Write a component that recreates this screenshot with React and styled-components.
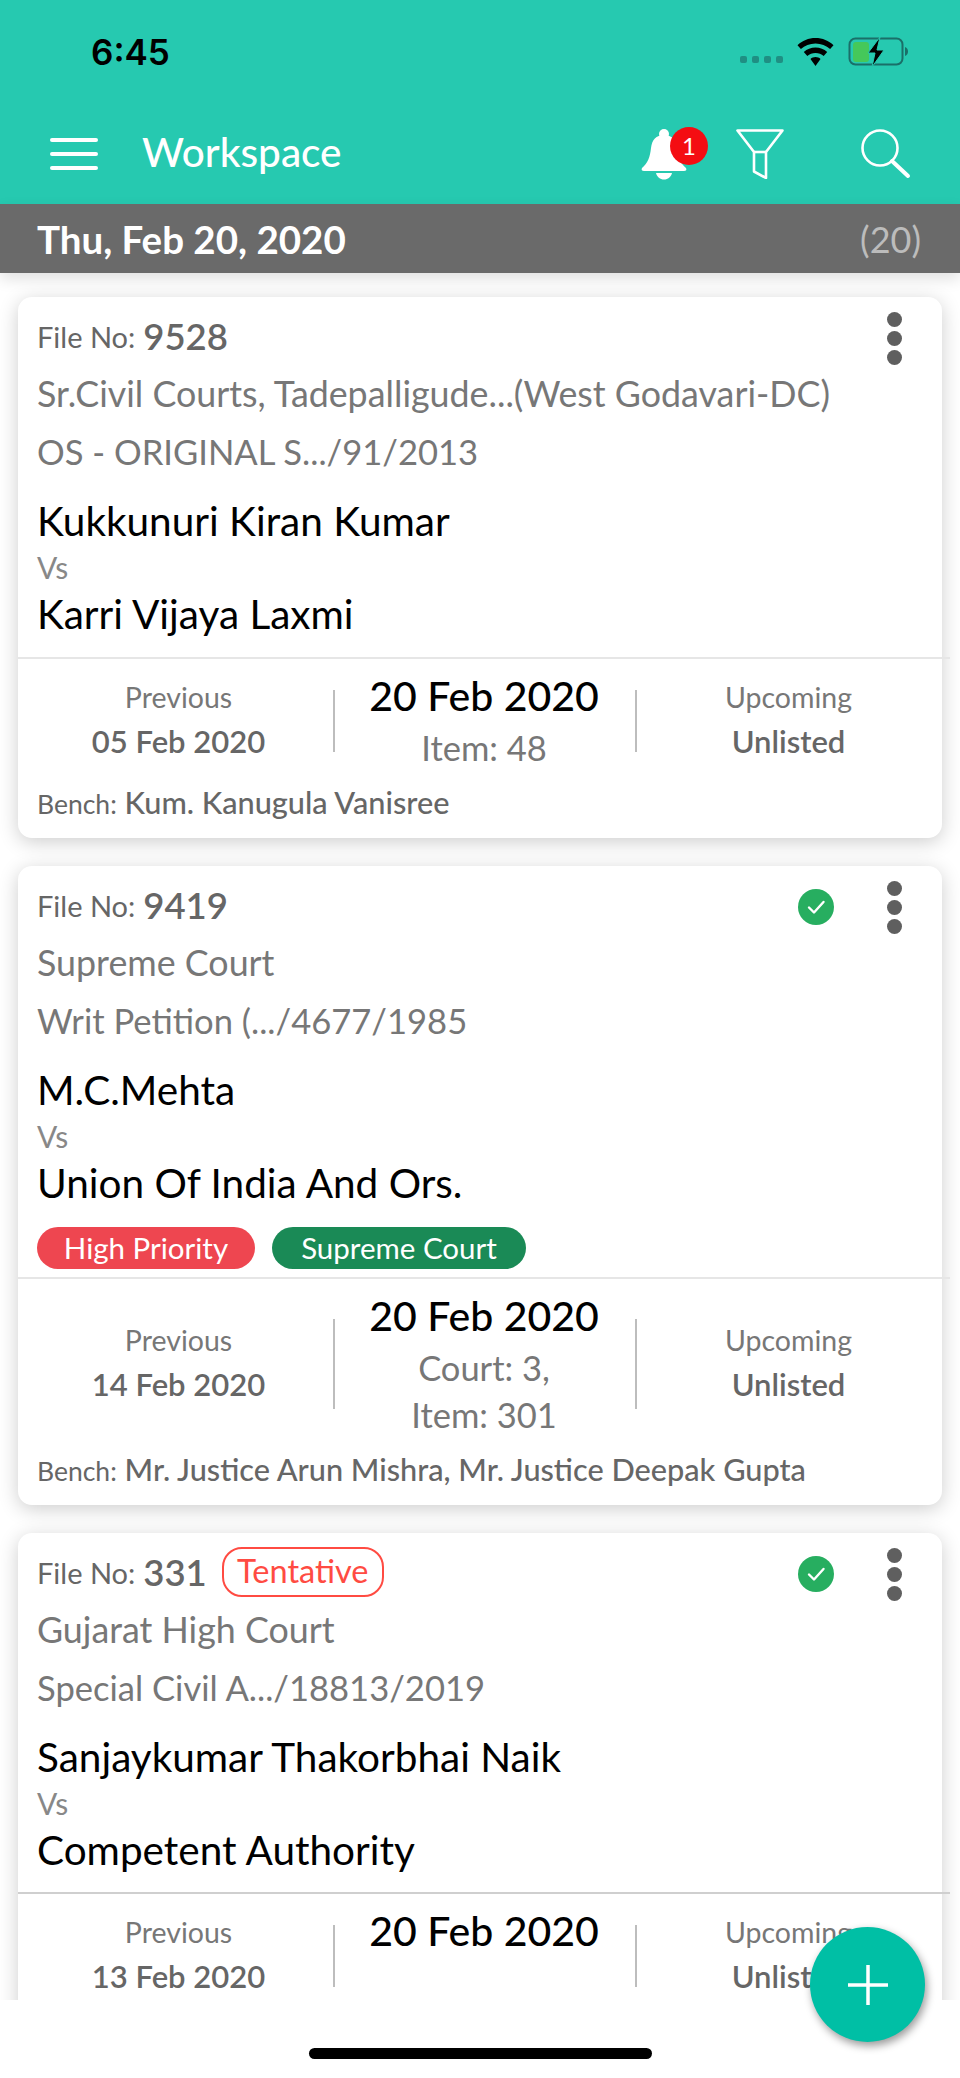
import React from "react";
import styled, { createGlobalStyle } from "styled-components";

const GlobalStyle = createGlobalStyle`
  html, body {
    margin: 0;
    padding: 0;
    background: #fff;
    font-family: "Lato", "Open Sans", sans-serif;
  }
  * { box-sizing: border-box; }
`;

const cases = [
  {
    id: 1,
    fileNo: "9528",
    court: "Sr.Civil Courts, Tadepalligude...(West Godavari-DC)",
    caseNo: "OS - ORIGINAL S.../91/2013",
    first: "Kukkunuri Kiran Kumar",
    second: "Karri Vijaya Laxmi",
    previous: "05 Feb 2020",
    item: ["Item: 48"],
    bench: "Kum. Kanugula Vanisree",
    gap: 19,
  },
  {
    id: 2,
    fileNo: "9419",
    done: true,
    court: "Supreme Court",
    caseNo: "Writ Petition (.../4677/1985",
    first: "M.C.Mehta",
    second: "Union Of India And Ors.",
    chips: true,
    previous: "14 Feb 2020",
    item: ["Court: 3,", "Item: 301"],
    bench: "Mr. Justice Arun Mishra, Mr. Justice Deepak Gupta",
    gap: 8,
  },
  {
    id: 3,
    fileNo: "331",
    tentative: true,
    done: true,
    court: "Gujarat High Court",
    caseNo: "Special Civil A.../18813/2019",
    first: "Sanjaykumar Thakorbhai Naik",
    second: "Competent Authority",
    previous: "13 Feb 2020",
    item: [],
    gap: 18,
  },
];

function WifiIcon() {
  return (
    <svg width="37" height="28" viewBox="0 0 37 28">
      <path d="M18.5 0C11.5 0 5.2 2.7 0.5 7.2l3.4 3.8C7.7 7.500 12.900 5.400 18.500 5.400S29.300 7.500 33.100 11l3.400-3.800C31.800 2.700 25.500 0 18.500 0z" fill="#000" />
      <path d="M18.500 9.500c-4.500 0-8.600 1.700-11.700 4.500l3.500 3.900c2.200-1.900 5-3 8.200-3s6 1.100 8.200 3l3.500-3.900c-3.100-2.800-7.200-4.500-11.700-4.500z" fill="#000" />
      <path d="M18.500 19c-2 0-3.700 0.700-5 1.900l5 7.100 5-7.100c-1.300-1.200-3-1.900-5-1.900z" fill="#000" />
    </svg>
  );
}

function BatteryIcon() {
  return (
    <svg width="62" height="30" viewBox="0 0 62 30">
      <rect x="1.500" y="1.500" width="53" height="26" rx="6" fill="none" stroke="#1a6f68" strokeWidth="2" />
      <path d="M57 10c2 0.500 3 2.500 3 4.500s-1 4-3 4.500z" fill="#1a6f68" />
      <rect x="5" y="5" width="16" height="20" rx="3" fill="#45c85a" />
      <path d="M32 0 20 16h7L24 30l12-17h-7z" fill="#000" stroke="#26c9b0" strokeWidth="1" />
    </svg>
  );
}

function BellIcon() {
  return (
    <svg width="48" height="52" viewBox="0 0 48 52">
      <circle cx="23" cy="6" r="5" fill="#fff" />
      <path d="M23 7c-8 0-12 5-13 13-1 9-3 15-9 20-1 2 0 3 2 3h40c2 0 3-1 2-3-6-5-8-11-9-20-1-8-5-13-13-13z" fill="#fff" />
      <path d="M15 45h16c-1 4-4 6.500-8 6.500s-7-2.500-8-6.500z" fill="#fff" />
    </svg>
  );
}

function FunnelIcon() {
  return (
    <svg width="48" height="50" viewBox="0 0 48 50">
      <path d="M1.500 1.500h45L30 23v26l-12-6.500V23z" fill="none" stroke="#fff" strokeWidth="2.600" strokeLinejoin="round" />
      <path d="M18 23h12" stroke="#fff" strokeWidth="2.600" />
    </svg>
  );
}

function SearchIcon() {
  return (
    <svg width="50" height="50" viewBox="0 0 50 50">
      <circle cx="19" cy="19" r="17.500" fill="none" stroke="#fff" strokeWidth="2.600" />
      <path d="M31 32l16 15" stroke="#fff" strokeWidth="4" strokeLinecap="round" />
    </svg>
  );
}

function CheckIcon() {
  return (
    <svg width="36" height="36" viewBox="0 0 36 36">
      <circle cx="18" cy="18" r="18" fill="#27ae60" />
      <path d="M11 18.500l5 5 9.500-10.500" fill="none" stroke="#fff" strokeWidth="2.400" strokeLinecap="round" strokeLinejoin="round" />
    </svg>
  );
}

function CaseCard({ data }) {
  return (
    <Card>
      <FileRow>
        <FileLabel>File No:</FileLabel>
        <FileNumber>{data.fileNo}</FileNumber>
        {data.tentative && <Tentative>Tentative</Tentative>}
        <FileActions>
          {data.done && <CheckIcon />}
          <Kebab>
            <Dot />
            <Dot />
            <Dot />
          </Kebab>
        </FileActions>
      </FileRow>
      <InfoLine>{data.court}</InfoLine>
      <CaseLine>{data.caseNo}</CaseLine>
      <FirstParty>{data.first}</FirstParty>
      <Versus>Vs</Versus>
      <SecondParty>{data.second}</SecondParty>
      {data.chips && (
        <Chips>
          <Chip $color="#ee4650" $width={218}>High Priority</Chip>
          <Chip $color="#1a8a56" $width={254}>Supreme Court</Chip>
        </Chips>
      )}
      <Divider $gap={data.gap} $strong={data.id === 3} />
      <Dates>
        <SideCol>
          <SideLabel>Previous</SideLabel>
          <SideValue>{data.previous}</SideValue>
        </SideCol>
        <Separator $tall={data.item.length > 1} />
        <MainCol>
          <MainDate>20 Feb 2020</MainDate>
          <ItemLines>
            {data.item.map((line) => (
              <ItemLine key={line}>{line}</ItemLine>
            ))}
          </ItemLines>
        </MainCol>
        <Separator $tall={data.item.length > 1} />
        <SideCol>
          <SideLabel>Upcoming</SideLabel>
          <SideValue>Unlisted</SideValue>
        </SideCol>
      </Dates>
      <Bench>
        {data.bench && (
          <>
            <BenchLabel>Bench:</BenchLabel> {data.bench}
          </>
        )}
      </Bench>
    </Card>
  );
}

export default function App() {
  return (
    <Page>
      <GlobalStyle />
      <Header>
        <StatusBar>
          <Time>6:45</Time>
          <StatusIcons>
            <SignalDots>
              <SignalDot />
              <SignalDot />
              <SignalDot />
              <SignalDot />
            </SignalDots>
            <WifiIcon />
            <BatteryIcon />
          </StatusIcons>
        </StatusBar>
        <NavBar>
          <Burger>
            <BurgerLine />
            <BurgerLine />
            <BurgerLine />
          </Burger>
          <NavTitle>Workspace</NavTitle>
          <NavIcons>
            <BellWrap>
              <BellIcon />
              <Badge>1</Badge>
            </BellWrap>
            <FunnelIcon />
            <SearchIcon />
          </NavIcons>
        </NavBar>
      </Header>
      <DateBar>
        <DateText>Thu, Feb 20, 2020</DateText>
        <DateCount>(20)</DateCount>
      </DateBar>
      <List>
        {cases.map((c) => (
          <CaseCard key={c.id} data={c} />
        ))}
      </List>
      <HomeArea>
        <HomeBar />
      </HomeArea>
      <Fab>
        <svg width="42" height="42" viewBox="0 0 42 42">
          <path d="M21 1v40M1 21h40" stroke="#fff" strokeWidth="3.500" />
        </svg>
      </Fab>
    </Page>
  );
}

const Page = styled.div`
  position: relative;
  width: 960px;
  height: 2078px;
  display: flex;
  flex-direction: column;
  overflow: hidden;
  background: #fff;
`;

const Header = styled.header`
  height: 204px;
  background: #26c9b0;
  flex-shrink: 0;
`;

const StatusBar = styled.div`
  height: 104px;
  padding: 0 50px 0 91px;
  display: flex;
  align-items: center;
  justify-content: space-between;
`;

const Time = styled.span`
  font-family: "Inter", sans-serif;
  font-size: 35px;
  font-weight: 600;
  color: #000;
`;

const StatusIcons = styled.div`
  display: flex;
  align-items: center;
  gap: 14px;
`;

const SignalDots = styled.div`
  display: flex;
  gap: 5px;
  margin-top: 14px;
`;

const SignalDot = styled.span`
  width: 7px;
  height: 7px;
  border-radius: 2px;
  background: #1f8f83;
`;

const NavBar = styled.div`
  height: 100px;
  padding: 0 49px 0 50px;
  display: flex;
  align-items: center;
`;

const Burger = styled.div`
  width: 48px;
  display: flex;
  flex-direction: column;
  gap: 10px;
`;

const BurgerLine = styled.span`
  height: 4px;
  border-radius: 2px;
  background: #fff;
`;

const NavTitle = styled.div`
  margin-left: 44px;
  padding-bottom: 6px;
  font-size: 40.500px;
  color: #fff;
  font-weight: 500;
`;

const NavIcons = styled.div`
  margin-left: auto;
  display: flex;
  align-items: center;
  & > svg:first-of-type {
    margin-left: 47px;
  }
  & > svg:last-of-type {
    margin-left: 77px;
  }
`;

const BellWrap = styled.div`
  position: relative;
  width: 48px;
  height: 52px;
`;

const Badge = styled.span`
  position: absolute;
  top: -1px;
  left: 29px;
  width: 38px;
  height: 38px;
  border-radius: 50%;
  background: #f40d12;
  color: #fff;
  font-size: 24px;
  line-height: 38px;
  text-align: center;
`;

const DateBar = styled.div`
  height: 69px;
  padding: 0 39px 0 37px;
  flex-shrink: 0;
  display: flex;
  align-items: center;
  justify-content: space-between;
  background: #6a6a6a;
  box-shadow: 0 6px 14px rgba(0, 0, 0, 0.12);
  position: relative;
  z-index: 1;
`;

const DateText = styled.span`
  font-size: 38.500px;
  font-weight: 700;
  color: #fff;
`;

const DateCount = styled.span`
  font-size: 36px;
  color: #bcbcbc;
`;

const List = styled.main`
  flex: 1;
  min-height: 0;
  overflow: hidden;
  padding: 24px 18px 0;
  display: flex;
  flex-direction: column;
  gap: 28px;
  background: #fff;
`;

const Card = styled.article`
  flex-shrink: 0;
  padding-top: 10px;
  background: #fff;
  border-radius: 14px;
  box-shadow: 0 4px 20px rgba(0, 0, 0, 0.2);
`;

const FileRow = styled.div`
  height: 58px;
  padding: 0 40px 0 19px;
  display: flex;
  align-items: center;
`;

const FileLabel = styled.span`
  font-size: 29px;
  color: #666;
`;

const FileNumber = styled.span`
  margin-left: 8px;
  font-size: 36.500px;
  font-weight: 600;
  color: #666;
`;

const Tentative = styled.span`
  margin-left: 15px;
  height: 50px;
  width: 162px;
  border: 2px solid #ff4b42;
  border-radius: 20px;
  color: #ff4b42;
  font-size: 32.500px;
  line-height: 44px;
  text-align: center;
`;

const FileActions = styled.div`
  margin-left: auto;
  margin-top: 4px;
  display: flex;
  align-items: center;
  gap: 53px;
`;

const Kebab = styled.div`
  width: 15px;
  display: flex;
  flex-direction: column;
  gap: 4px;
`;

const Dot = styled.span`
  width: 15px;
  height: 15px;
  border-radius: 50%;
  background: #5f5f5f;
`;

const InfoLine = styled.div`
  height: 58px;
  padding-left: 19px;
  font-size: 35.800px;
  line-height: 58px;
  color: #777;
`;

const CaseLine = styled(InfoLine)`
  font-size: 34.600px;
`;

const FirstParty = styled.div`
  margin-top: 17px;
  height: 46px;
  padding-left: 19px;
  font-size: 40.500px;
  line-height: 46px;
  color: #000;
`;

const Versus = styled.div`
  height: 46px;
  padding-left: 19px;
  font-size: 30px;
  line-height: 46px;
  color: #888;
`;

const SecondParty = styled(FirstParty)`
  margin-top: 0;
  height: 48px;
  line-height: 48px;
`;

const Chips = styled.div`
  margin-top: 20px;
  padding-left: 19px;
  display: flex;
  gap: 17px;
`;

const Chip = styled.span`
  width: ${(p) => p.$width}px;
  height: 42px;
  border-radius: 21px;
  background: ${(p) => p.$color};
  color: #fff;
  font-size: 29.500px;
  line-height: 41px;
  text-align: center;
`;

const Divider = styled.div`
  margin-top: ${(p) => p.$gap}px;
  margin-right: -8px;
  height: 2px;
  background: ${(p) => (p.$strong ? "#cfcfcf" : "#e6e6e6")};
`;

const Dates = styled.div`
  padding: 14px 0 0 6px;
  display: grid;
  grid-template-columns: 309px 0 1fr 0 307px;
  align-items: center;
`;

const SideCol = styled.div`
  margin-bottom: 7px;
  text-align: center;
`;

const SideLabel = styled.div`
  height: 44px;
  font-size: 28.500px;
  line-height: 44px;
  color: #777;
`;

const SideValue = styled.div`
  height: 44px;
  font-size: 31px;
  line-height: 44px;
  font-weight: 600;
  color: #666;
`;

const Separator = styled.div`
  width: 2px;
  height: ${(p) => (p.$tall ? "90px" : "62px")};
  margin-bottom: 3px;
  background: #bdbdbd;
`;

const MainCol = styled.div`
  text-align: center;
`;

const MainDate = styled.div`
  height: 46px;
  font-size: 41px;
  line-height: 46px;
  font-weight: 500;
  color: #000;
`;

const ItemLines = styled.div`
  margin-top: 5px;
  min-height: 47px;
`;

const ItemLine = styled.div`
  height: 47px;
  font-size: 34.500px;
  line-height: 47px;
  color: #777;
`;

const Bench = styled.div`
  height: 67px;
  padding-left: 19px;
  font-size: 30.700px;
  line-height: 64px;
  font-weight: 500;
  color: #666;
`;

const BenchLabel = styled.span`
  font-size: 26.500px;
  font-weight: 400;
`;

const HomeArea = styled.div`
  height: 78px;
  flex-shrink: 0;
  display: flex;
  justify-content: center;
  padding-top: 48px;
  background: #fff;
  position: relative;
  z-index: 1;
`;

const HomeBar = styled.div`
  width: 343px;
  height: 11px;
  border-radius: 6px;
  background: #000;
`;

const Fab = styled.button`
  position: absolute;
  left: 810px;
  top: 1927px;
  z-index: 2;
  width: 115px;
  height: 115px;
  padding: 0;
  border: 0;
  border-radius: 50%;
  background: #00bfa5;
  box-shadow: 2px 4px 8px rgba(0, 0, 0, 0.4);
  display: flex;
  align-items: center;
  justify-content: center;
`;
